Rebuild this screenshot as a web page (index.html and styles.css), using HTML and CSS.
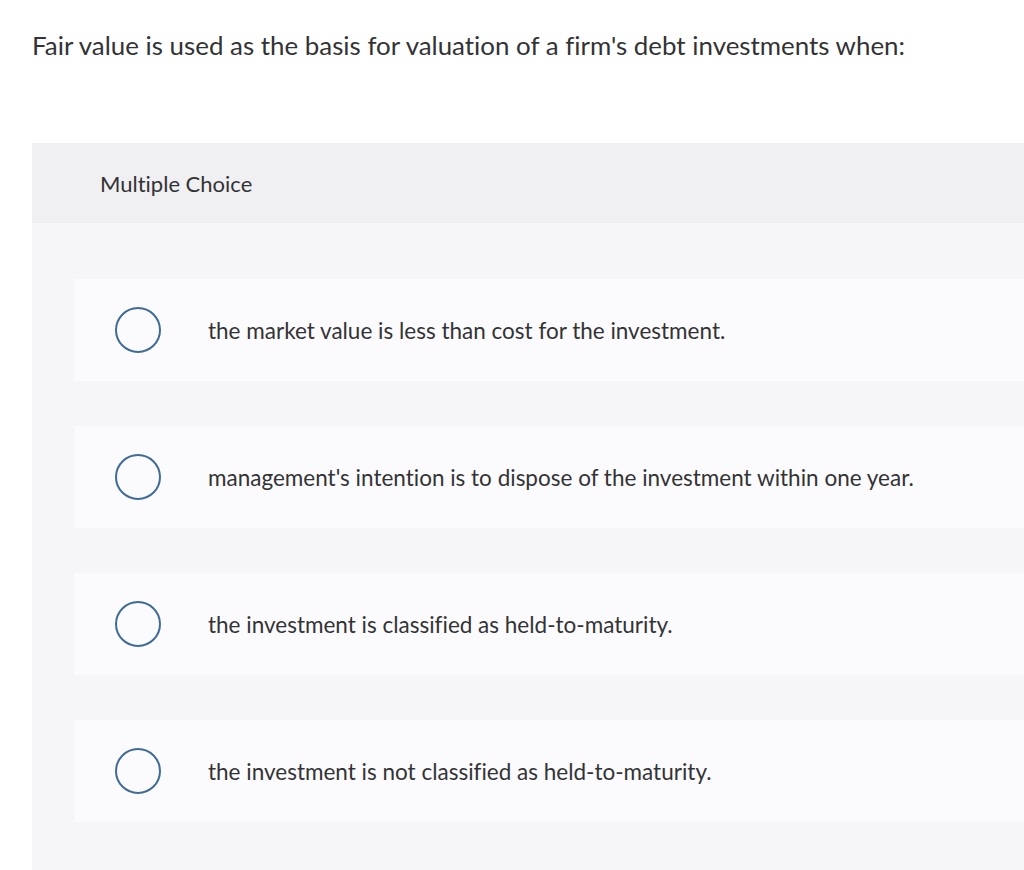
FILE: index.html
```html
<!DOCTYPE html>
<html>
<head>
<meta charset="utf-8">
<link rel="stylesheet" href="styles.css">
</head>
<body>
<div class="page">
  <p class="question">Fair value is used as the basis for valuation of a firm's debt investments when:</p>
  <div class="card">
    <div class="card-head">Multiple Choice</div>
    <div class="card-body">
      <div class="option"><span class="radio"></span><span class="label">the market value is less than cost for the investment.</span></div>
      <div class="option"><span class="radio"></span><span class="label">management's intention is to dispose of the investment within one year.</span></div>
      <div class="option"><span class="radio"></span><span class="label">the investment is classified as held-to-maturity.</span></div>
      <div class="option"><span class="radio"></span><span class="label">the investment is not classified as held-to-maturity.</span></div>
    </div>
  </div>
</div>
</body>
</html>
```
FILE: styles.css
```css
html, body {
  margin: 0;
  padding: 0;
  background: #ffffff;
  overflow: hidden;
}
.page {
  width: 1024px;
  height: 870px;
  overflow: hidden;
  font-family: Lato, "Liberation Sans", sans-serif;
  font-variant-ligatures: none;
  color: #333335;
}
.question {
  margin: 0;
  padding: 28px 0 0 32px;
  font-size: 25.9px;
  line-height: 34px;
  box-sizing: border-box;
  height: 143px;
}
.card {
  margin-left: 32px;
  width: 1040px;
  background: #f6f5f7;
  height: 727px;
}
.card-head {
  height: 80px;
  background: #f0eff2;
  padding-left: 68px;
  font-size: 22px;
  line-height: 82px;
  box-sizing: border-box;
}
.card-body {
  padding: 56px 0 0 42px;
  display: flex;
  flex-direction: column;
  gap: 45px;
}
.option {
  height: 102px;
  background: #fbfbfd;
  display: flex;
  align-items: center;
  padding-left: 41px;
}
.radio {
  width: 42px;
  height: 42px;
  border: 2px solid #3f6b97;
  border-radius: 50%;
  flex: none;
  margin-right: 47px;
}
.label {
  font-size: 22.5px;
}
```
